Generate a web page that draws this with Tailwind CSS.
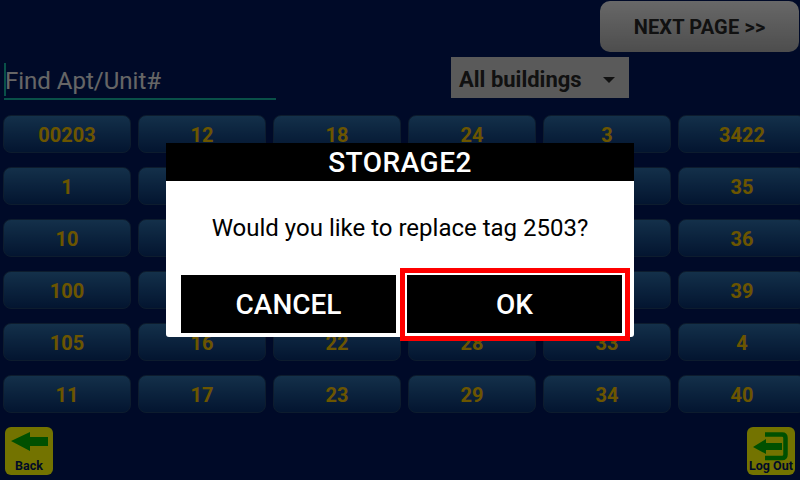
<!DOCTYPE html>
<html lang="en">
<head>
    <meta charset="UTF-8">
    <meta name="viewport" content="width=device-width, initial-scale=1.0">
    <script src="https://cdn.jsdelivr.net/npm/@tailwindcss/browser@4"></script>
    <title>Storage tags</title>
</head>
<body class="w-[800px] h-[480px] overflow-hidden bg-[#001859] font-['Roboto',sans-serif]">

    <!-- page behind the dialog -->
    <div class="flex flex-col h-[480px]">
        <div class="flex justify-end pt-px pr-px">
            <button class="w-[199px] h-[51px] rounded-[10px] bg-gradient-to-b from-[#e7e7e7] to-[#ababab] text-[#262626] text-[20px] font-bold tracking-[0.15px]">NEXT PAGE &gt;&gt;</button>
        </div>

        <div class="flex justify-between items-start pl-1 pr-[171px] mt-[5px] h-[58px]">
            <div class="relative w-[272px] h-[43px] border-b-2 border-[#16b2a0] flex items-center pt-[7px] pl-px">
                <div class="absolute left-0 top-[6px] w-0.5 h-[33px] bg-[#16b2a0]"></div>
                <span class="text-[24px] text-[#e3e3e3]">Find Apt/Unit#</span>
            </div>
            <div class="w-[178px] h-[41px] bg-[#c8c8c8] flex items-center justify-between pt-1 pl-[8px] pr-[14px]">
                <span class="text-[22px] font-bold text-[#262626]">All buildings</span>
                <span class="w-0 h-0 border-x-[6px] border-x-transparent border-t-[6px] border-t-[#262626]"></span>
            </div>
        </div>

        <div class="grid grid-cols-[repeat(6,128px)] gap-x-[7px] gap-y-[14px] px-[3px]">
            <button class="h-[38px] pt-px rounded-lg border border-[#1d3f66] bg-gradient-to-b from-[#2c6ba4] to-[#092f6b] text-[#eebd00] text-[20px] font-bold">00203</button>
            <button class="h-[38px] pt-px rounded-lg border border-[#1d3f66] bg-gradient-to-b from-[#2c6ba4] to-[#092f6b] text-[#eebd00] text-[20px] font-bold">12</button>
            <button class="h-[38px] pt-px rounded-lg border border-[#1d3f66] bg-gradient-to-b from-[#2c6ba4] to-[#092f6b] text-[#eebd00] text-[20px] font-bold">18</button>
            <button class="h-[38px] pt-px rounded-lg border border-[#1d3f66] bg-gradient-to-b from-[#2c6ba4] to-[#092f6b] text-[#eebd00] text-[20px] font-bold">24</button>
            <button class="h-[38px] pt-px rounded-lg border border-[#1d3f66] bg-gradient-to-b from-[#2c6ba4] to-[#092f6b] text-[#eebd00] text-[20px] font-bold">3</button>
            <button class="h-[38px] pt-px rounded-lg border border-[#1d3f66] bg-gradient-to-b from-[#2c6ba4] to-[#092f6b] text-[#eebd00] text-[20px] font-bold">3422</button>

            <button class="h-[38px] pt-px rounded-lg border border-[#1d3f66] bg-gradient-to-b from-[#2c6ba4] to-[#092f6b] text-[#eebd00] text-[20px] font-bold">1</button>
            <button class="h-[38px] pt-px rounded-lg border border-[#1d3f66] bg-gradient-to-b from-[#2c6ba4] to-[#092f6b] text-[#eebd00] text-[20px] font-bold">13</button>
            <button class="h-[38px] pt-px rounded-lg border border-[#1d3f66] bg-gradient-to-b from-[#2c6ba4] to-[#092f6b] text-[#eebd00] text-[20px] font-bold">19</button>
            <button class="h-[38px] pt-px rounded-lg border border-[#1d3f66] bg-gradient-to-b from-[#2c6ba4] to-[#092f6b] text-[#eebd00] text-[20px] font-bold">25</button>
            <button class="h-[38px] pt-px rounded-lg border border-[#1d3f66] bg-gradient-to-b from-[#2c6ba4] to-[#092f6b] text-[#eebd00] text-[20px] font-bold">30</button>
            <button class="h-[38px] pt-px rounded-lg border border-[#1d3f66] bg-gradient-to-b from-[#2c6ba4] to-[#092f6b] text-[#eebd00] text-[20px] font-bold">35</button>

            <button class="h-[38px] pt-px rounded-lg border border-[#1d3f66] bg-gradient-to-b from-[#2c6ba4] to-[#092f6b] text-[#eebd00] text-[20px] font-bold">10</button>
            <button class="h-[38px] pt-px rounded-lg border border-[#1d3f66] bg-gradient-to-b from-[#2c6ba4] to-[#092f6b] text-[#eebd00] text-[20px] font-bold">14</button>
            <button class="h-[38px] pt-px rounded-lg border border-[#1d3f66] bg-gradient-to-b from-[#2c6ba4] to-[#092f6b] text-[#eebd00] text-[20px] font-bold">2</button>
            <button class="h-[38px] pt-px rounded-lg border border-[#1d3f66] bg-gradient-to-b from-[#2c6ba4] to-[#092f6b] text-[#eebd00] text-[20px] font-bold">26</button>
            <button class="h-[38px] pt-px rounded-lg border border-[#1d3f66] bg-gradient-to-b from-[#2c6ba4] to-[#092f6b] text-[#eebd00] text-[20px] font-bold">31</button>
            <button class="h-[38px] pt-px rounded-lg border border-[#1d3f66] bg-gradient-to-b from-[#2c6ba4] to-[#092f6b] text-[#eebd00] text-[20px] font-bold">36</button>

            <button class="h-[38px] pt-px rounded-lg border border-[#1d3f66] bg-gradient-to-b from-[#2c6ba4] to-[#092f6b] text-[#eebd00] text-[20px] font-bold">100</button>
            <button class="h-[38px] pt-px rounded-lg border border-[#1d3f66] bg-gradient-to-b from-[#2c6ba4] to-[#092f6b] text-[#eebd00] text-[20px] font-bold">15</button>
            <button class="h-[38px] pt-px rounded-lg border border-[#1d3f66] bg-gradient-to-b from-[#2c6ba4] to-[#092f6b] text-[#eebd00] text-[20px] font-bold">20</button>
            <button class="h-[38px] pt-px rounded-lg border border-[#1d3f66] bg-gradient-to-b from-[#2c6ba4] to-[#092f6b] text-[#eebd00] text-[20px] font-bold">27</button>
            <button class="h-[38px] pt-px rounded-lg border border-[#1d3f66] bg-gradient-to-b from-[#2c6ba4] to-[#092f6b] text-[#eebd00] text-[20px] font-bold">32</button>
            <button class="h-[38px] pt-px rounded-lg border border-[#1d3f66] bg-gradient-to-b from-[#2c6ba4] to-[#092f6b] text-[#eebd00] text-[20px] font-bold">39</button>

            <button class="h-[38px] pt-px rounded-lg border border-[#1d3f66] bg-gradient-to-b from-[#2c6ba4] to-[#092f6b] text-[#eebd00] text-[20px] font-bold">105</button>
            <button class="h-[38px] pt-px rounded-lg border border-[#1d3f66] bg-gradient-to-b from-[#2c6ba4] to-[#092f6b] text-[#eebd00] text-[20px] font-bold">16</button>
            <button class="h-[38px] pt-px rounded-lg border border-[#1d3f66] bg-gradient-to-b from-[#2c6ba4] to-[#092f6b] text-[#eebd00] text-[20px] font-bold">22</button>
            <button class="h-[38px] pt-px rounded-lg border border-[#1d3f66] bg-gradient-to-b from-[#2c6ba4] to-[#092f6b] text-[#eebd00] text-[20px] font-bold">28</button>
            <button class="h-[38px] pt-px rounded-lg border border-[#1d3f66] bg-gradient-to-b from-[#2c6ba4] to-[#092f6b] text-[#eebd00] text-[20px] font-bold">33</button>
            <button class="h-[38px] pt-px rounded-lg border border-[#1d3f66] bg-gradient-to-b from-[#2c6ba4] to-[#092f6b] text-[#eebd00] text-[20px] font-bold">4</button>

            <button class="h-[38px] pt-px rounded-lg border border-[#1d3f66] bg-gradient-to-b from-[#2c6ba4] to-[#092f6b] text-[#eebd00] text-[20px] font-bold">11</button>
            <button class="h-[38px] pt-px rounded-lg border border-[#1d3f66] bg-gradient-to-b from-[#2c6ba4] to-[#092f6b] text-[#eebd00] text-[20px] font-bold">17</button>
            <button class="h-[38px] pt-px rounded-lg border border-[#1d3f66] bg-gradient-to-b from-[#2c6ba4] to-[#092f6b] text-[#eebd00] text-[20px] font-bold">23</button>
            <button class="h-[38px] pt-px rounded-lg border border-[#1d3f66] bg-gradient-to-b from-[#2c6ba4] to-[#092f6b] text-[#eebd00] text-[20px] font-bold">29</button>
            <button class="h-[38px] pt-px rounded-lg border border-[#1d3f66] bg-gradient-to-b from-[#2c6ba4] to-[#092f6b] text-[#eebd00] text-[20px] font-bold">34</button>
            <button class="h-[38px] pt-px rounded-lg border border-[#1d3f66] bg-gradient-to-b from-[#2c6ba4] to-[#092f6b] text-[#eebd00] text-[20px] font-bold">40</button>
        </div>

        <div class="flex justify-between px-[5px] mt-[14px]">
            <button class="relative w-12 h-12 rounded-md bg-[#ffff00] text-[#001859]">
                <svg class="absolute left-0 top-0" width="48" height="48" viewBox="0 0 48 48"><path d="M6 14 L25 5 V10 H43 V19 H25 V24 Z" fill="#00b200"/></svg>
                <span class="absolute left-0 right-0 bottom-[1px] text-[12.5px] leading-[16px] font-bold">Back</span>
            </button>
            <button class="relative w-12 h-12 rounded-md bg-[#ffff00] text-[#001859]">
                <svg class="absolute left-0 top-0" width="48" height="48" viewBox="0 0 48 48"><path d="M6 20 L19 12 V16 H35 V23 H19 V27 Z" fill="#00b200"/><path d="M18 7.5 H35 Q38.5 7.5 38.5 11 V27.5 Q38.5 31 35 31 H18" fill="none" stroke="#00b200" stroke-width="4.5"/></svg>
                <span class="absolute left-0 right-0 bottom-[1px] text-[12.5px] leading-[16px] font-bold">Log Out</span>
            </button>
        </div>
    </div>

    <!-- dim layer + dialog -->
    <div class="fixed inset-0 bg-black/55"></div>

    <div class="absolute left-[166px] top-[143px] w-[468px] h-[194px] bg-white rounded-b-[3px]">
        <div class="h-[38px] pt-px bg-black text-white text-[28px] font-medium tracking-[0.5px] flex items-center justify-center">STORAGE2</div>
        <div class="h-[94px] flex items-center justify-center text-[24px] text-black">Would you like to replace tag 2503?</div>
        <div class="flex pl-[15px] gap-[11px]">
            <button class="w-[215px] h-[58px] pt-0.5 bg-black text-white text-[28px] font-medium">CANCEL</button>
            <button class="w-[215px] h-[58px] pt-0.5 bg-black text-white text-[28px] font-medium">OK</button>
        </div>
    </div>

    <!-- red highlight round OK -->
    <div class="absolute left-[400px] top-[268px] w-[230px] h-[73px] border-[5px] border-[#ff0000]"></div>

</body>
</html>
